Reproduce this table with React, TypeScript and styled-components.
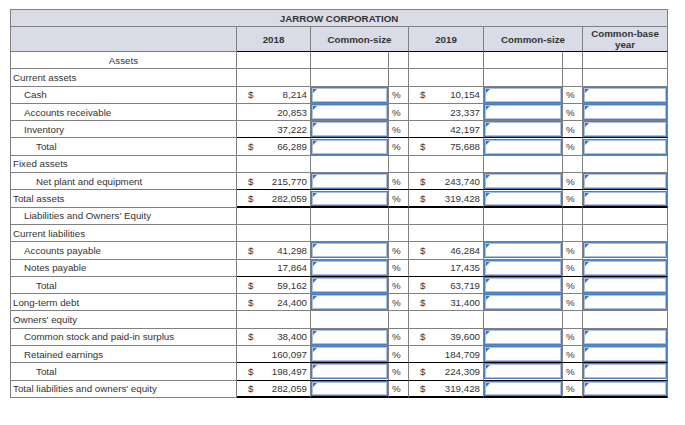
import styled, { createGlobalStyle } from 'styled-components';

type Edge = 'grey' | 'thin' | 'thick';

type Line = {
  label: string;
  indent?: 0 | 1 | 2;
  center?: boolean;
  a?: string;
  b?: string;
  dollar?: boolean;
  below?: Edge;
};

const lines: Line[] = [
  { label: 'Assets', center: true },
  { label: 'Current assets' },
  { label: 'Cash', indent: 1, a: '8,214', b: '10,154', dollar: true },
  { label: 'Accounts receivable', indent: 1, a: '20,853', b: '23,337' },
  { label: 'Inventory', indent: 1, a: '37,222', b: '42,197', below: 'thin' },
  { label: 'Total', indent: 2, a: '66,289', b: '75,688', dollar: true },
  { label: 'Fixed assets' },
  { label: 'Net plant and equipment', indent: 2, a: '215,770', b: '243,740', dollar: true, below: 'thin' },
  { label: 'Total assets', a: '282,059', b: '319,428', dollar: true, below: 'thick' },
  { label: "Liabilities and Owners' Equity", indent: 1 },
  { label: 'Current liabilities' },
  { label: 'Accounts payable', indent: 1, a: '41,298', b: '46,284', dollar: true },
  { label: 'Notes payable', indent: 1, a: '17,864', b: '17,435', below: 'thin' },
  { label: 'Total', indent: 2, a: '59,162', b: '63,719', dollar: true },
  { label: 'Long-term debt', a: '24,400', b: '31,400', dollar: true },
  { label: "Owners' equity" },
  { label: 'Common stock and paid-in surplus', indent: 1, a: '38,400', b: '39,600', dollar: true },
  { label: 'Retained earnings', indent: 1, a: '160,097', b: '184,709', below: 'thin' },
  { label: 'Total', indent: 2, a: '198,497', b: '224,309', dollar: true, below: 'thin' },
  { label: "Total liabilities and owners' equity", a: '282,059', b: '319,428', dollar: true, below: 'thick' },
];

const widths = [226, 74, 78, 20, 75, 79, 20, 85];

function Amount({ value, dollar }: { value?: string; dollar?: boolean }) {
  if (!value) return null;
  return (
    <Money>
      <span>{dollar ? '$' : ''}</span>
      <span>{value}</span>
    </Money>
  );
}

function Entry({ short }: { short: boolean }) {
  return (
    <Field>
      <Input $short={short} type="text" />
    </Field>
  );
}

function App() {
  return (
    <Page>
      <GlobalStyle />
      <Sheet>
        <colgroup>
          {widths.map((w, i) => (
            <col key={i} style={{ width: w }} />
          ))}
        </colgroup>
        <thead>
          <TitleRow>
            <HeadCell colSpan={8}>JARROW CORPORATION</HeadCell>
          </TitleRow>
          <SubRow>
            <HeadCell />
            <HeadCell $dark>2018</HeadCell>
            <HeadCell $dark colSpan={2}>Common-size</HeadCell>
            <HeadCell $dark>2019</HeadCell>
            <HeadCell $dark colSpan={2}>Common-size</HeadCell>
            <HeadCell $dark>
              Common-base
              <br />
              year
            </HeadCell>
          </SubRow>
        </thead>
        <tbody>
          {lines.map((l, i) => {
            const edge = l.below ?? 'grey';
            const has = !!l.a;
            const short = edge === 'thick';
            return (
              <BodyRow key={i}>
                <Label $indent={l.indent ?? 0} $center={l.center}>
                  {l.label}
                </Label>
                <Cell $edge={edge}>
                  <Amount value={l.a} dollar={l.dollar} />
                </Cell>
                <Cell $edge={edge}>{has && <Entry short={short} />}</Cell>
                <Pct $edge={edge}>{has ? '%' : ''}</Pct>
                <Cell $edge={edge}>
                  <Amount value={l.b} dollar={l.dollar} />
                </Cell>
                <Cell $edge={edge}>{has && <Entry short={short} />}</Cell>
                <Pct $edge={edge}>{has ? '%' : ''}</Pct>
                <Cell $edge={edge}>{has && <Entry short={short} />}</Cell>
              </BodyRow>
            );
          })}
        </tbody>
      </Sheet>
    </Page>
  );
}

const GlobalStyle = createGlobalStyle`
  body {
    margin: 0;
    background: #fff;
  }
`;

const Page = styled.div`
  padding: 9px 0 0 10px;
  font-family: "Liberation Sans", Arial, sans-serif;
  font-size: 9.75px;
  color: #333;
`;

const Sheet = styled.table`
  border-collapse: separate;
  border-spacing: 0;
  table-layout: fixed;
  width: 658px;
  border-top: 1px solid #808080;
  border-left: 1px solid #808080;
`;

const TitleRow = styled.tr`
  height: 17px;
`;

const SubRow = styled.tr`
  height: 25px;
`;

const BodyRow = styled.tr`
  height: 17.3px;
`;

const HeadCell = styled.th<{ $dark?: boolean }>`
  background: #d9dce6;
  font-weight: bold;
  text-align: center;
  padding: 0;
  line-height: 11px;
  color: #333;
  border-right: 1px solid #808080;
  border-bottom: 1px solid ${(p) => (p.$dark ? '#000' : '#808080')};
`;

const edgeBorder = (e?: Edge) =>
  e === 'thick' ? '2px solid #000' : e === 'thin' ? '1px solid #000' : '1px solid #808080';

const Cell = styled.td<{ $edge?: Edge }>`
  padding: 0;
  white-space: nowrap;
  vertical-align: middle;
  border-right: 1px solid #808080;
  border-bottom: ${(p) => edgeBorder(p.$edge)};
`;

const Label = styled(Cell)<{ $indent: number; $center?: boolean }>`
  text-align: ${(p) => (p.$center ? 'center' : 'left')};
  padding-left: ${(p) => (p.$center ? 0 : [2, 13, 25][p.$indent])}px;
`;

const Pct = styled(Cell)`
  padding-left: 3px;
`;

const Money = styled.div`
  display: flex;
  justify-content: space-between;
  padding: 0 3px 0 11px;
`;

const Field = styled.div`
  position: relative;

  &::before {
    content: '';
    position: absolute;
    top: 2px;
    left: 2px;
    border-top: 4px solid #3f73c0;
    border-right: 4px solid transparent;
  }
`;

const Input = styled.input<{ $short: boolean }>`
  display: block;
  box-sizing: border-box;
  width: 100%;
  height: ${(p) => (p.$short ? 15 : 16)}px;
  margin: 0;
  padding: 0 4px;
  border: 1px solid #4e7fc2;
  box-shadow: inset 0 0 0 1px #a9c2e6;
  background: #fff;
  outline: none;
  font: inherit;
`;

export default App;
